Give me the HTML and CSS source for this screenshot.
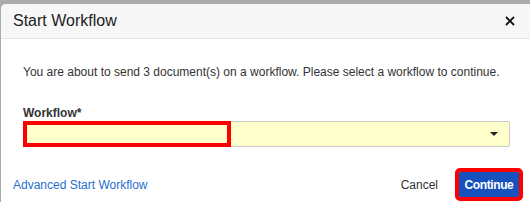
FILE: index.html
```html
<!DOCTYPE html>
<html>
<head>
<meta charset="utf-8">
<title>Start Workflow</title>
<link rel="stylesheet" href="styles.css">
</head>
<body>
    <div class="dialog">
        <div class="dialog-header">
            <span class="dialog-title">Start Workflow</span>
            <button class="close-button" title="Close">
                <svg width="10" height="10" viewBox="0 0 10 10">
                    <path d="M1 1 L9 9 M9 1 L1 9" stroke="#111" stroke-width="1.8" fill="none"/>
                </svg>
            </button>
        </div>
        <div class="dialog-body">
            <p class="intro">You are about to send 3 document(s) on a workflow. Please select a workflow to continue.</p>
            <label class="field-label">Workflow*</label>
            <div class="select-wrap">
                <div class="select-box">
                    <span class="select-arrow"></span>
                </div>
                <div class="highlight"></div>
            </div>
        </div>
        <div class="dialog-footer">
            <a href="#" class="advanced-link">Advanced Start Workflow</a>
            <div class="actions">
                <span class="cancel">Cancel</span>
                <button class="continue">Continue</button>
            </div>
        </div>
    </div>
</body>
</html>
```

FILE: styles.css
```css
* {
  font-family: Arial, "Liberation Sans", sans-serif;
  box-sizing: border-box;
}
html {
  height: 100%;
}
body {
  height: 100%;
  margin: 0;
  padding: 4px 0 0 1px;
  background: #acacac;
  overflow: hidden;
}

.dialog {
  width: 529px;
  height: 100%;
  background: #fff;
  border-radius: 5px 0 0 0;
}
.dialog-header {
  height: 35px;
  display: flex;
  align-items: center;
  justify-content: space-between;
  padding: 0 15px 0 12px;
  background: #f7f7f7;
  border-bottom: 1px solid #e5e5e5;
  border-radius: 5px 0 0 0;
}
.dialog-title {
  font-size: 16px;
  line-height: 18px;
  color: #222;
}
.close-button {
  border: 0;
  padding: 0;
  background: none;
  width: 10px;
  height: 10px;
  display: flex;
}

.dialog-body {
  padding: 26px 20px 0 22px;
}
.intro {
  margin: 0;
  font-size: 12px;
  line-height: 14px;
  color: #333;
}
.field-label {
  display: block;
  margin-top: 27px;
  font-size: 12px;
  font-weight: bold;
  line-height: 14px;
  color: #333;
}
.select-wrap {
  position: relative;
  margin-top: 1px;
}
.select-box {
  height: 26px;
  display: flex;
  align-items: center;
  justify-content: flex-end;
  padding-right: 11px;
  background: #ffffcc;
  border: 1px solid #c9c9c9;
  border-radius: 2px;
}
.select-arrow {
  width: 0;
  height: 0;
  border-left: 4px solid transparent;
  border-right: 4px solid transparent;
  border-top: 4px solid #222;
}
.highlight {
  position: absolute;
  left: 0;
  top: 0;
  width: 208px;
  height: 26px;
  border: 4px solid #ff0000;
}

.dialog-footer {
  display: flex;
  align-items: center;
  justify-content: space-between;
  margin-top: 25px;
  padding: 0 11px 0 12px;
}
.advanced-link {
  font-size: 12px;
  line-height: 14px;
  color: #1f6fd1;
  text-decoration: none;
}
.actions {
  display: flex;
  align-items: center;
}
.cancel {
  font-size: 12px;
  line-height: 14px;
  color: #333;
  margin-right: 21px;
}
.continue {
  height: 25px;
  width: 60px;
  padding: 0;
  border: 0;
  border-radius: 1px;
  background: #1652bd;
  color: #fff;
  font-size: 12px;
  font-weight: bold;
  letter-spacing: -0.4px;
  outline: 4px solid #ff0000;
}
```
